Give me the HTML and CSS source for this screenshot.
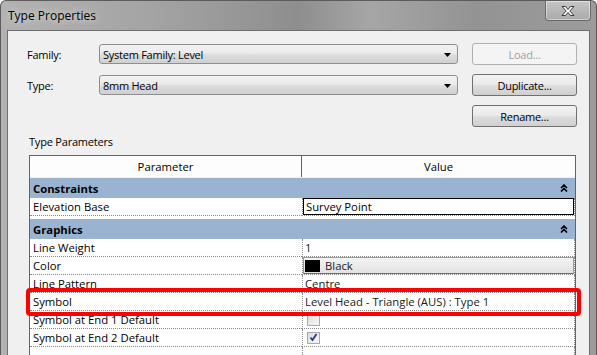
FILE: index.html
```html
<!DOCTYPE html>
<html>
<head>
<meta charset="utf-8">
<link rel="stylesheet" href="styles.css">
</head>
<body>
<div class="window">
  <div class="titlebar">
    <span class="title">Type Properties</span>
    <div class="close">
      <svg width="16" height="12" viewBox="0 0 16 12"><path d="M2 1.5h3.5L8 4.5l2.5-3H14L9.8 6 14 10.5h-3.5L8 7.5l-2.5 3H2L6.2 6z" fill="#fff" stroke="#3a3a3a" stroke-width="1" stroke-linejoin="round"/></svg>
    </div>
  </div>
  <div class="frame">
    <div class="client">
      <div class="form">
        <span class="lbl">Family:</span>
        <div class="combo"><span>System Family: Level</span><svg class="arrow" width="7" height="4" viewBox="0 0 7 4"><path d="M0 0h7L3.5 4z" fill="#000"/></svg></div>
        <div class="btn disabled">Load...</div>
        <span class="lbl">Type:</span>
        <div class="combo"><span>8mm Head</span><svg class="arrow" width="7" height="4" viewBox="0 0 7 4"><path d="M0 0h7L3.5 4z" fill="#000"/></svg></div>
        <div class="btn">Duplicate...</div>
        <div class="btn rename">Rename...</div>
      </div>
      <div class="section-label">Type Parameters</div>
      <div class="table">
        <div class="thead">
          <div class="th th-param">Parameter</div>
          <div class="th">Value</div>
        </div>
        <div class="cat first"><span>Constraints</span><svg width="8" height="8" viewBox="0 0 8 8"><path d="M1 4L4 1L7 4M1 7.5L4 4.5L7 7.5" fill="none" stroke="#000" stroke-width="1.6"/></svg></div>
        <div class="row"><div class="pc">Elevation Base</div><div class="vc"><div class="edit">Survey Point</div></div></div>
        <div class="cat"><span>Graphics</span><svg width="8" height="8" viewBox="0 0 8 8"><path d="M1 4L4 1L7 4M1 7.5L4 4.5L7 7.5" fill="none" stroke="#000" stroke-width="1.6"/></svg></div>
        <div class="row"><div class="pc">Line Weight</div><div class="vc">1</div></div>
        <div class="row"><div class="pc">Color</div><div class="vc"><div class="colorbtn"><span class="swatch"></span>Black</div></div></div>
        <div class="row"><div class="pc">Line Pattern</div><div class="vc">Centre</div></div>
        <div class="row"><div class="pc">Symbol</div><div class="vc">Level Head - Triangle (AUS) : Type 1</div></div>
        <div class="row"><div class="pc">Symbol at End 1 Default</div><div class="vc"><span class="check"></span></div></div>
        <div class="row"><div class="pc">Symbol at End 2 Default</div><div class="vc"><span class="check on"><svg width="9" height="9" viewBox="0 0 9 9"><path d="M1.5 4.5L3.5 7L7.5 1" fill="none" stroke="#2a3d7a" stroke-width="1.8"/></svg></span></div></div>
        <div class="row"><div class="pc">&nbsp;</div><div class="vc">&nbsp;</div></div>
      </div>
    </div>
  </div>
  <div class="highlight"></div>
</div>
</body>
</html>
```

FILE: styles.css
```css
* { box-sizing: border-box; }
html, body { margin: 0; padding: 0; }
body {
  width: 597px;
  height: 355px;
  overflow: hidden;
  font-family: "Open Sans", "Noto Sans", sans-serif;
  font-size: 11px;
  color: #000;
  background: #fff;
}
.window {
  position: relative;
  width: 597px;
  height: 355px;
  overflow: hidden;
  background: linear-gradient(90deg, #b2b2b2 0%, #a4a4a4 25%, #8e8e8e 50%, #a6a6a6 62%, #939393 80%, #9c9c9c 100%);
  border-top-left-radius: 6px;
  border-top-right-radius: 6px;
  border: 1px solid #5c5c5c;
  border-bottom: none;
  display: flex;
  flex-direction: column;
}
.titlebar {
  flex: 0 0 29px;
  height: 29px;
  display: flex;
  justify-content: space-between;
  align-items: flex-start;
  padding-left: 7px;
  padding-right: 5px;
}
.title {
  font-size: 12px;
  line-height: 13px;
  margin-top: 8px;
  color: #000;
  text-shadow: 0 0 6px #d8d8d8, 0 0 10px #cfcfcf;
}
.close {
  width: 46px;
  height: 20px;
  border: 1px solid #6a6a6a;
  border-top: none;
  border-radius: 0 0 4px 4px;
  background: linear-gradient(#c6c6c6, #a9a9a9);
  box-shadow: inset 0 0 0 1px rgba(255,255,255,0.45);
  display: flex;
  align-items: center;
  justify-content: center;
}
.frame {
  flex: 1 1 auto;
  min-height: 0;
  padding: 0 6px 0 6px;
}
.client {
  height: 100%;
  background: #f0f0f0;
  border: 1px solid #6e6e6e;
  border-bottom: none;
  padding: 12px 12px 0 19px;
}
.form {
  display: grid;
  grid-template-columns: 58px 359px 105px;
  grid-template-rows: 22px 22px 22px;
  column-gap: 14px;
  row-gap: 9px;
  align-items: center;
  letter-spacing: -0.25px;
}
.lbl { color: #000; }
.combo {
  height: 20px;
  border: 1px solid #8e8f8f;
  border-radius: 3px;
  background: linear-gradient(#f3f3f3 0%, #ebebeb 45%, #dddddd 55%, #d0d0d0 100%);
  display: flex;
  align-items: center;
  justify-content: space-between;
  padding: 0 6px 0 3px;
}
.arrow { margin-top: 1px; }
.btn {
  height: 22px;
  border: 1px solid #707070;
  border-radius: 3px;
  background: linear-gradient(#f2f2f2 0%, #ebebeb 45%, #dddddd 55%, #cfcfcf 100%);
  display: flex;
  align-items: center;
  justify-content: center;
}
.btn.disabled {
  border-color: #adb2b5;
  background: #f4f4f4;
  color: #a0a0a0;
}
.rename { grid-column: 3; }
.section-label {
  margin-top: 8px;
  margin-left: 2px;
  height: 14px;
  line-height: 14px;
  letter-spacing: -0.2px;
}
.table {
  margin-top: 6px;
  margin-left: 2px;
  width: 547px;
  border: 1px solid #646464;
  border-bottom: none;
  background: #fff;
  font-size: 11.3px;
}
.thead {
  display: grid;
  grid-template-columns: 272px 1fr;
  height: 22px;
  background: #fdfdfd;
  border-bottom: 1px solid #f0f0f0;
}
.th {
  display: flex;
  align-items: center;
  justify-content: center;
}
.th-param { border-right: 1px solid #646464; }
.cat {
  height: 20px;
  margin-top: 3px;
  background: #99b3d0;
  display: flex;
  align-items: center;
  justify-content: space-between;
  padding: 0 7px 0 3px;
  font-weight: bold;
}
.cat.first { margin-top: 0; }
.row {
  display: grid;
  grid-template-columns: 272px 1fr;
  height: 18px;
}
.pc {
  padding-left: 3px;
  line-height: 17px;
  border-bottom: 1px dotted #8a8a8a;
  white-space: nowrap;
}
.vc {
  padding-left: 2px;
  line-height: 17px;
  border-left: 1px dotted #8a8a8a;
  border-right: 1px dotted #8a8a8a;
  border-bottom: 1px dotted #8a8a8a;
  color: #1a1a1a;
  display: flex;
  align-items: center;
}
.edit {
  margin-left: -2px;
  width: calc(100% + 3px);
  height: 17px;
  border: 1px solid #000;
  padding-left: 2px;
  line-height: 15px;
  color: #000;
}
.colorbtn {
  margin-left: -2px;
  width: calc(100% + 3px);
  height: 17px;
  border: 1px solid #9a9a9a;
  border-bottom-color: #6e6e6e;
  background: linear-gradient(#f4f4f4, #e2e2e2);
  display: flex;
  align-items: center;
  padding-left: 1px;
}
.swatch {
  width: 15px;
  height: 12px;
  background: #000;
  margin-right: 5px;
}
.check {
  width: 13px;
  height: 12px;
  margin-left: 2px;
  border: 1px solid #a9a9a9;
  background: linear-gradient(135deg, #dcdcdc, #f8f8f8);
  display: flex;
  align-items: center;
  justify-content: center;
}
.highlight {
  position: absolute;
  left: 25px;
  top: 287px;
  width: 555px;
  height: 28px;
  border: 4px solid #f00;
  border-radius: 4px;
}
```
